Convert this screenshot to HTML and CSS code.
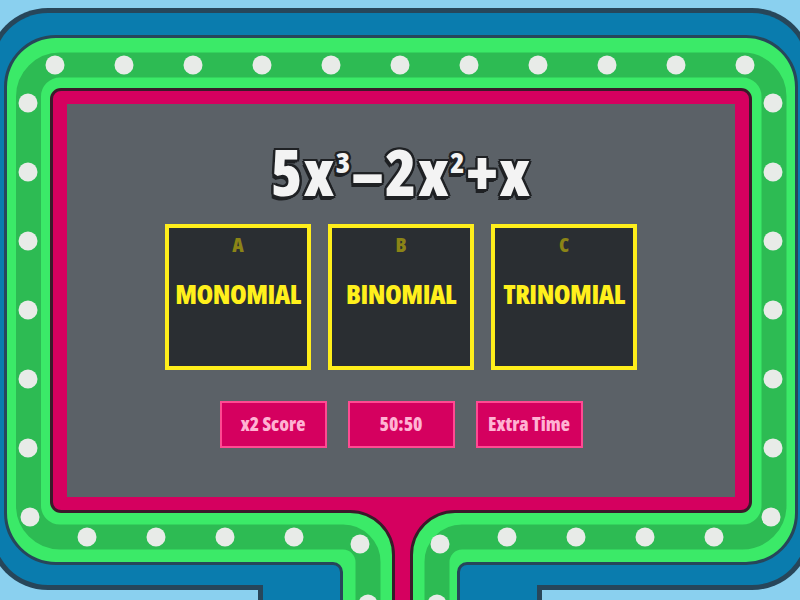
FILE: index.html
```html
<!DOCTYPE html>
<html lang="en">
<head>
<meta charset="utf-8">
<title>Gameshow Quiz</title>
<link rel="stylesheet" href="styles.css">
</head>
<body>
<div class="stage">
  <svg class="frame" width="800" height="600" viewBox="0 0 800 600" aria-hidden="true">
    <defs>
      <path id="greenShape" d="M56 38 H746 A49 49 0 0 1 795 87 V513 A49 49 0 0 1 746 562 H467 A10 10 0 0 0 457 572 V615 H343 V572 A10 10 0 0 0 333 562 H56 A49 49 0 0 1 7 513 V87 A49 49 0 0 1 56 38 Z"/>
      <path id="magentaShape" d="M61 91 H741 A8 8 0 0 1 749 99 V502 A8 8 0 0 1 741 510 H455 A45 45 0 0 0 410 555 V615 H395 V555 A45 45 0 0 0 350 510 H61 A8 8 0 0 1 53 502 V99 A8 8 0 0 1 61 91 Z"/>
    </defs>
    <rect width="800" height="600" fill="#8ad0ef"/>
    <g fill="#27465a">
      <rect x="-12" y="8" width="824" height="582" rx="60"/>
      <rect x="258" y="540" width="284" height="70"/>
    </g>
    <g fill="#0a7cae">
      <rect x="-7" y="13" width="814" height="572" rx="55"/>
      <rect x="263" y="540" width="274" height="70"/>
    </g>
    <use href="#greenShape" fill="#3bea68" stroke="#27465a" stroke-width="6"/>
    <use href="#greenShape" fill="#3bea68"/>
    <path d="M368 615 V562 A25 25 0 0 0 343 537 H60 A31.5 31.5 0 0 1 28.5 505.5 V96.5 A31.5 31.5 0 0 1 60 65 H742.5 A31.5 31.5 0 0 1 774 96.5 V505.5 A31.5 31.5 0 0 1 742.5 537 H462 A25 25 0 0 0 437 562 V615" fill="none" stroke="#2dbb53" stroke-width="25"/>
    <g fill="#e8ebe8">
      <circle cx="55" cy="65" r="9.5"/><circle cx="124" cy="65" r="9.5"/><circle cx="193" cy="65" r="9.5"/><circle cx="262" cy="65" r="9.5"/><circle cx="331" cy="65" r="9.5"/><circle cx="400" cy="65" r="9.5"/><circle cx="469" cy="65" r="9.5"/><circle cx="538" cy="65" r="9.5"/><circle cx="607" cy="65" r="9.5"/><circle cx="676" cy="65" r="9.5"/><circle cx="745" cy="65" r="9.5"/>
      <circle cx="28" cy="103" r="9.5"/><circle cx="28" cy="172" r="9.5"/><circle cx="28" cy="241" r="9.5"/><circle cx="28" cy="310" r="9.5"/><circle cx="28" cy="379" r="9.5"/><circle cx="28" cy="448" r="9.5"/><circle cx="30" cy="517" r="9.5"/>
      <circle cx="773" cy="103" r="9.5"/><circle cx="773" cy="172" r="9.5"/><circle cx="773" cy="241" r="9.5"/><circle cx="773" cy="310" r="9.5"/><circle cx="773" cy="379" r="9.5"/><circle cx="773" cy="448" r="9.5"/><circle cx="771" cy="517" r="9.5"/>
      <circle cx="87" cy="537" r="9.5"/><circle cx="156" cy="537" r="9.5"/><circle cx="225" cy="537" r="9.5"/><circle cx="294" cy="537" r="9.5"/><circle cx="360" cy="544" r="9.5"/><circle cx="368" cy="604" r="9.5"/>
      <circle cx="440" cy="544" r="9.5"/><circle cx="507" cy="537" r="9.5"/><circle cx="576" cy="537" r="9.5"/><circle cx="645" cy="537" r="9.5"/><circle cx="714" cy="537" r="9.5"/><circle cx="437" cy="604" r="9.5"/>
    </g>
    <use href="#magentaShape" fill="#d5005f" stroke="#3a1a2a" stroke-width="6"/>
    <use href="#magentaShape" fill="#d5005f"/>
  </svg>

  <main class="screen">
    <h1 class="question">5x<sup>3</sup>–2x<sup>2</sup>+x</h1>
    <div class="answers">
      <div class="card"><span class="label">A</span><span class="answer">MONOMIAL</span></div>
      <div class="card"><span class="label">B</span><span class="answer">BINOMIAL</span></div>
      <div class="card"><span class="label">C</span><span class="answer">TRINOMIAL</span></div>
    </div>
    <div class="powerups">
      <button class="power">x2 Score</button>
      <button class="power">50:50</button>
      <button class="power">Extra Time</button>
    </div>
  </main>
</div>
</body>
</html>
```

FILE: styles.css
```css
* {
  box-sizing: border-box;
}

body {
  margin: 0;
  background: #8ad0ef;
  font-family: "Open Sans", "DejaVu Sans", sans-serif;
}

.stage {
  position: relative;
  width: 800px;
  height: 600px;
  overflow: hidden;
  padding: 104px 0 0 67px;
}

.frame {
  position: absolute;
  left: 0;
  top: 0;
  display: block;
}

.screen {
  position: relative;
  width: 668px;
  height: 393px;
  background: #5b6167;
  display: flex;
  flex-direction: column;
  align-items: center;
}

.question {
  margin: 32px 0 0;
  font-size: 64px;
  line-height: 72px;
  font-weight: 800;
  font-stretch: 85%;
  letter-spacing: 1.5px;
  color: #f3f3f3;
  text-shadow:
    2.5px 0 #1f2124, -2.5px 0 #1f2124, 0 2.5px #1f2124, 0 -2.5px #1f2124,
    1.8px 1.8px #1f2124, -1.8px 1.8px #1f2124, 1.8px -1.8px #1f2124, -1.8px -1.8px #1f2124,
    -2px 3.5px #1f2124;
}

.question sup {
  font-size: 29px;
  line-height: 0;
  vertical-align: 23px;
}

.answers {
  display: flex;
  gap: 17px;
  margin-top: 16px;
}

.card {
  width: 146px;
  height: 146px;
  border: 4px solid #ffee1b;
  background: #2a2e32;
  display: flex;
  flex-direction: column;
  align-items: center;
  padding-top: 5px;
}

.label {
  font-size: 20px;
  line-height: 24px;
  font-weight: 800;
  font-stretch: 75%;
  color: #8b8416;
}

.answer {
  margin-top: 21px;
  font-size: 27px;
  line-height: 32px;
  font-weight: 800;
  font-stretch: 75%;
  letter-spacing: -0.5px;
  color: #fff01c;
}

.powerups {
  display: flex;
  gap: 21px;
  margin-top: 31px;
}

.power {
  width: 107px;
  height: 47px;
  padding: 0;
  background: #d5005f;
  border: 2px solid #ff4a92;
  color: #ffb3d3;
  font: 800 19px/1 "Open Sans", "DejaVu Sans", sans-serif;
  font-stretch: 82%;
}
```
